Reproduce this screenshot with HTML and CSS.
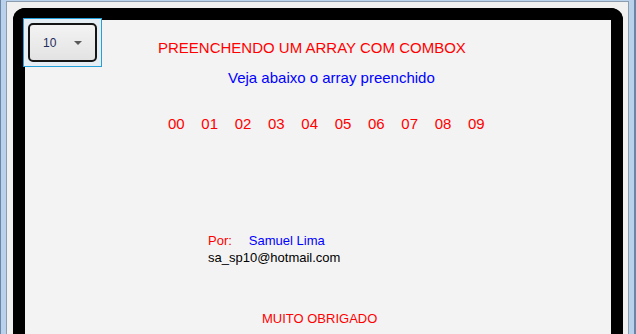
FILE: index.html
```html
<!DOCTYPE html>
<html>
<head>
<meta charset="utf-8">
<link rel="stylesheet" href="styles.css">
</head>
<body>
<div class="window">
  <div class="client">
    <div class="frame">
      <div class="content">
        <div class="title">PREENCHENDO UM ARRAY COM COMBOX</div>
        <div class="subtitle">Veja abaixo o array preenchido</div>
        <div class="numbers">
          <span>00</span><span>01</span><span>02</span><span>03</span><span>04</span><span>05</span><span>06</span><span>07</span><span>08</span><span>09</span>
        </div>
        <div class="author">
          <div class="author-line"><span class="red">Por:</span><span class="name">Samuel Lima</span></div>
          <div class="email">sa_sp10@hotmail.com</div>
        </div>
        <div class="thanks">MUITO OBRIGADO</div>
      </div>
    </div>
    <div class="combo-focus">
      <div class="combo">
        <span class="combo-value">10</span>
        <svg class="combo-arrow" width="8" height="4" viewBox="0 0 8 4"><path d="M0 0H8L4 4Z" fill="#5a5a5a"/></svg>
      </div>
    </div>
  </div>
</div>
</body>
</html>
```
FILE: styles.css
```css
html, body {
  margin: 0;
  padding: 0;
}
body {
  width: 636px;
  height: 334px;
  overflow: hidden;
  font-family: "Liberation Sans", Arial, sans-serif;
}
.window {
  box-sizing: border-box;
  width: 636px;
  height: 334px;
  overflow: hidden;
  background: #b9d1ea;
  border-left: 1px solid #6a85a6;
  border-right: 2px solid #6a85a6;
  padding: 1px 5px 0 5px;
}
.client {
  position: relative;
  box-sizing: border-box;
  height: 333px;
  background: #f0f0f0;
  border: 1px solid #8d9db0;
  border-bottom: none;
  padding: 6px 5px 0 6px;
}
.frame {
  box-sizing: border-box;
  height: 326px;
  border: 12px solid #000;
  border-bottom: none;
  border-radius: 12px 12px 0 0;
  background: #f3f3f3;
}
.content {
  padding-top: 19px;
  font-size: 15px;
  line-height: 17px;
}
.title {
  color: #ff0000;
  margin-left: 133px;
}
.subtitle {
  color: #0000ff;
  margin-left: 203px;
  margin-top: 13px;
}
.numbers {
  display: flex;
  gap: 16.65px;
  color: #ff0000;
  margin-left: 143px;
  margin-top: 29px;
}
.author {
  margin-top: 100px;
  margin-left: 183px;
  font-size: 13px;
  line-height: 17px;
}
.red {
  color: #ff0000;
}
.name {
  color: #0000ff;
  margin-left: 17px;
}
.email {
  color: #000;
}
.thanks {
  color: #ff0000;
  font-size: 13px;
  margin-top: 44px;
  margin-left: 237px;
}
.combo-focus {
  position: absolute;
  left: 16px;
  top: 16px;
  box-sizing: border-box;
  width: 79px;
  height: 49px;
  border: 1px solid #26a0da;
  background: #e5eef5;
  padding: 4px;
}
.combo {
  box-sizing: border-box;
  width: 69px;
  height: 39px;
  border: 2px solid #151515;
  border-radius: 5px;
  background: linear-gradient(#f3f3f3, #e3e3e3);
  display: flex;
  align-items: center;
  padding-left: 13px;
  font-size: 12px;
  color: #232a5c;
}
.combo-arrow {
  margin-left: 18px;
}
```
